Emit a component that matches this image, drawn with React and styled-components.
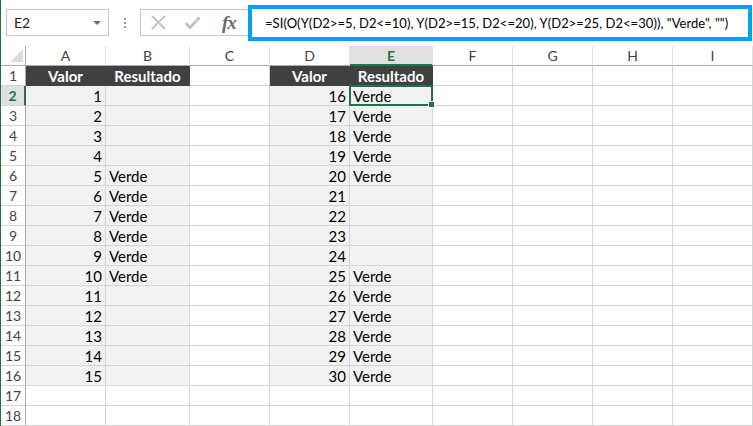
import React from "react";
import styled, { createGlobalStyle, css } from "styled-components";

const GlobalStyle = createGlobalStyle`
  html, body {
    margin: 0;
    padding: 0;
    background: #ffffff;
    overflow: hidden;
  }
  * { box-sizing: border-box; }
`;

const GREEN = "#217346";
const GRID = "#d4d4d4";
const HEAD_LINE = "#ababab";

const Window = styled.div`
  width: 753px;
  height: 426px;
  display: flex;
  flex-direction: column;
  border-left: 1px solid ${GREEN};
  font-family: "Lato", "Liberation Sans", sans-serif;
  color: #000;
  overflow: hidden;
`;

const FormulaBar = styled.div`
  height: 46px;
  display: flex;
  align-items: flex-start;
  padding-top: 5px;
  flex-shrink: 0;
`;

const NameBox = styled.div`
  margin: 4px 0 0 5px;
  width: 103px;
  height: 27px;
  border: 1px solid #c6c6c6;
  display: flex;
  align-items: center;
  justify-content: space-between;
  padding: 0 7px 0 7px;
  font-size: 14px;
  color: #222;
`;

const Arrow = styled.span`
  width: 0;
  height: 0;
  border-left: 4px solid transparent;
  border-right: 4px solid transparent;
  border-top: 4px solid #6f6f6f;
`;

const Dots = styled.div`
  width: 31px;
  height: 27px;
  margin-top: 4px;
  display: flex;
  flex-direction: column;
  align-items: center;
  justify-content: center;
  gap: 2px;

  span {
    width: 2px;
    height: 2px;
    background: #9a9a9a;
  }
`;

const FxBox = styled.div`
  margin-top: 4px;
  width: 108px;
  height: 27px;
  border: 1px solid #c6c6c6;
  border-right: none;
  display: flex;
  align-items: center;
  padding-left: 9px;
  gap: 17px;
`;

const FxLabel = styled.span`
  font-family: "Liberation Serif", "DejaVu Serif", serif;
  font-style: italic;
  font-weight: bold;
  font-size: 19px;
  color: #6a6a6a;
  margin-left: 4px;
  letter-spacing: -1px;
`;

const FormulaInput = styled.div`
  flex: 1;
  height: 36px;
  margin-right: 1px;
  border: 4px solid #00a2e8;
  display: flex;
  align-items: center;
  padding-left: 13px;
  font-size: 13px;
  letter-spacing: 0.05px;
  white-space: nowrap;
  overflow: hidden;
`;

const Sheet = styled.div`
  display: grid;
  grid-template-columns: 25px 80px 84px 80px 80px 83px 80px 80px 80px 80px;
  grid-auto-rows: 20px;
`;

const ColHead = styled.div`
  border-right: 1px solid #e0e0e0;
  border-bottom: 1px solid ${HEAD_LINE};
  display: flex;
  align-items: center;
  justify-content: center;
  font-size: 14px;
  color: #444;
  ${(p) =>
    p.$active &&
    css`
      background: #e1e1e1;
      color: ${GREEN};
      font-weight: bold;
      border-bottom: 2px solid ${GREEN};
    `}
`;

const Corner = styled.div`
  border-right: 1px solid ${HEAD_LINE};
  border-bottom: 1px solid ${HEAD_LINE};
  display: flex;
  align-items: flex-end;
  justify-content: flex-end;
  padding: 0 2px 3px 0;
`;

const RowHead = styled.div`
  border-right: 1px solid ${HEAD_LINE};
  border-bottom: 1px solid ${GRID};
  display: flex;
  align-items: center;
  justify-content: center;
  font-size: 14px;
  color: #444;
  ${(p) =>
    p.$active &&
    css`
      background: #e1e1e1;
      color: ${GREEN};
      font-weight: bold;
      border-right: 2px solid ${GREEN};
    `}
`;

const Cell = styled.div`
  position: relative;
  border-right: 1px solid ${GRID};
  border-bottom: 1px solid ${GRID};
  display: flex;
  align-items: center;
  font-size: 15px;
  white-space: nowrap;
  padding: 0 3px;
  justify-content: ${(p) => (p.$num ? "flex-end" : "flex-start")};
  background: ${(p) => (p.$fill ? "#f2f2f2" : "#ffffff")};
  ${(p) =>
    p.$head &&
    css`
      background: #404040;
      border-color: #404040;
      color: #ffffff;
      font-weight: bold;
      justify-content: center;
    `}
  ${(p) =>
    p.$selected &&
    css`
      &::after {
        content: "";
        position: absolute;
        top: -1px;
        left: -1px;
        right: -1px;
        bottom: -1px;
        border: 2px solid ${GREEN};
      }
      &::before {
        content: "";
        position: absolute;
        right: -3px;
        bottom: -3px;
        width: 5px;
        height: 5px;
        background: ${GREEN};
        border: 1px solid #fff;
        z-index: 2;
      }
    `}
`;

const COLS = ["A", "B", "C", "D", "E", "F", "G", "H", "I"];

const isVerdeLeft = (v) => v >= 5 && v <= 10;
const isVerdeRight = (v) =>
  (v >= 5 && v <= 10) || (v >= 15 && v <= 20) || (v >= 25 && v <= 30);

function cellFor(row, col) {
  if (row === 1) {
    if (col === "A" || col === "D") return { text: "Valor", head: true };
    if (col === "B" || col === "E") return { text: "Resultado", head: true };
    return {};
  }
  if (row >= 2 && row <= 16) {
    const left = row - 1;
    const right = row + 14;
    if (col === "A") return { text: left, num: true, fill: true };
    if (col === "B") return { text: isVerdeLeft(left) ? "Verde" : "", fill: true };
    if (col === "D") return { text: right, num: true, fill: true };
    if (col === "E") return { text: isVerdeRight(right) ? "Verde" : "", fill: true };
  }
  return {};
}

const XIcon = () => (
  <svg width="17" height="17" viewBox="0 0 17 17">
    <path d="M2 2 L15 15 M15 2 L2 15" stroke="#c4c4c4" strokeWidth="2" fill="none" />
  </svg>
);

const CheckIcon = () => (
  <svg width="17" height="17" viewBox="0 0 17 17">
    <path d="M1.5 9 L6 13.5 L15.5 3.5" stroke="#c4c4c4" strokeWidth="3" fill="none" />
  </svg>
);

const App = () => {
  const rows = Array.from({ length: 18 }, (_, i) => i + 1);
  return (
    <>
      <GlobalStyle />
      <Window>
        <FormulaBar>
          <NameBox>
            E2
            <Arrow />
          </NameBox>
          <Dots>
            <span />
            <span />
            <span />
          </Dots>
          <FxBox>
            <XIcon />
            <CheckIcon />
            <FxLabel>fx</FxLabel>
          </FxBox>
          <FormulaInput>
            =SI(O(Y(D2&gt;=5, D2&lt;=10), Y(D2&gt;=15, D2&lt;=20), Y(D2&gt;=25, D2&lt;=30)), "Verde", "")
          </FormulaInput>
        </FormulaBar>
        <Sheet>
          <Corner>
            <svg width="13" height="13" viewBox="0 0 13 13">
              <polygon points="13,0 13,13 0,13" fill="#dcdcdc" />
            </svg>
          </Corner>
          {COLS.map((c) => (
            <ColHead key={c} $active={c === "E"}>
              {c}
            </ColHead>
          ))}
          {rows.map((r) => (
            <React.Fragment key={r}>
              <RowHead $active={r === 2}>{r}</RowHead>
              {COLS.map((c) => {
                const d = cellFor(r, c);
                return (
                  <Cell
                    key={c}
                    $head={d.head}
                    $num={d.num}
                    $fill={d.fill}
                    $selected={r === 2 && c === "E"}
                  >
                    {d.text}
                  </Cell>
                );
              })}
            </React.Fragment>
          ))}
        </Sheet>
      </Window>
    </>
  );
};

export default App;
